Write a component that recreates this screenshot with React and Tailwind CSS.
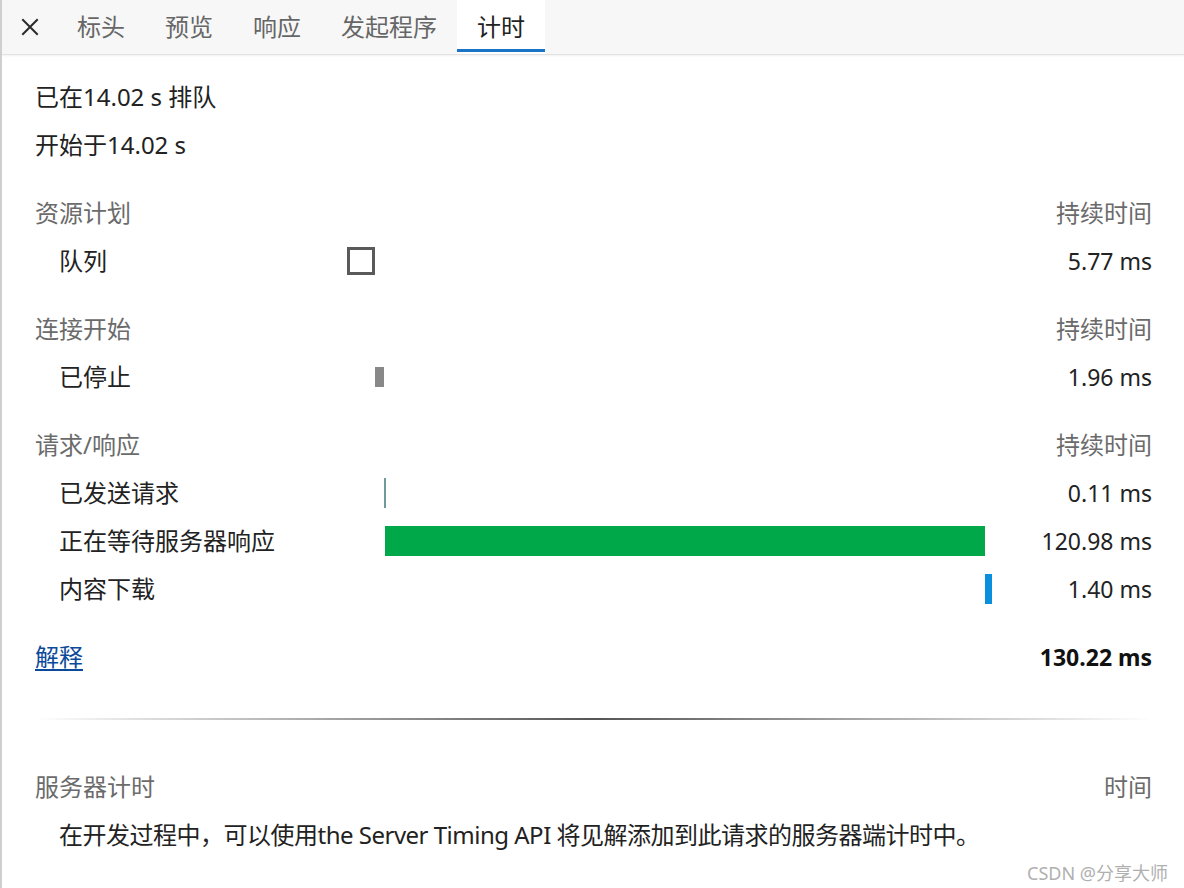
import React from "react";

const FONT = { fontFamily: '"Segoe UI", "Noto Sans", "Noto Sans CJK SC", sans-serif' };

function Tab({ label, active }) {
  return (
    <div
      className={
        "relative h-full flex items-center px-[20px] text-[24px] " +
        (active ? "bg-white text-[#222]" : "text-[#666]")
      }
    >
      <span className="leading-none">{label}</span>
      {active && <div className="absolute left-0 right-0 bottom-[2px] h-[3px] bg-[#1a73c4]" />}
    </div>
  );
}

function Header({ left, right }) {
  return (
    <div className="flex items-center justify-between h-[48px] text-[24px] text-[#6b6b6b]">
      <span>{left}</span>
      <span>{right}</span>
    </div>
  );
}

function Row({ label, value, children }) {
  return (
    <div className="flex items-center h-[48px] text-[24px] text-[#222]">
      <div className="w-[310px] pl-[24px] shrink-0">{label}</div>
      <div className="flex-1 flex items-center h-full">{children}</div>
      <div className="w-[158px] text-right shrink-0 text-[23px]">{value}</div>
    </div>
  );
}

export default function App() {
  return (
    <div className="relative w-[1184px] h-[888px] overflow-hidden bg-white border-l-[2px] border-[#cfcfcf]" style={FONT}>
      {/* Tab bar */}
      <div className="flex items-stretch h-[55px] bg-[#f7f7f7] border-b border-[#e2e2e2] shadow-[0_1px_2px_rgba(0,0,0,0.06)]">
        <div className="flex items-center pl-[18px] pr-[17px]">
          <svg width="20" height="20" viewBox="0 0 20 20" fill="none" stroke="#2b2b2b" strokeWidth="2" strokeLinecap="square">
            <path d="M3 3 L17 17 M17 3 L3 17" />
          </svg>
        </div>
        <Tab label="标头" />
        <Tab label="预览" />
        <Tab label="响应" />
        <Tab label="发起程序" />
        <Tab label="计时" active />
      </div>

      {/* Content */}
      <div className="pl-[33px] pr-[32px] pt-[18px]">
        <div className="flex items-center h-[48px] text-[24px] text-[#222]">已在14.02 s 排队</div>
        <div className="flex items-center h-[48px] text-[24px] text-[#222]">开始于14.02 s</div>

        <div className="mt-[20px]">
          <Header left="资源计划" right="持续时间" />
          <Row label="队列" value="5.77 ms">
            <div className="ml-[2px] w-[28px] h-[28px] border-[3px] border-[#5a5a5a]" />
          </Row>
        </div>

        <div className="mt-[20px]">
          <Header left="连接开始" right="持续时间" />
          <Row label="已停止" value="1.96 ms">
            <div className="ml-[30px] w-[9px] h-[20px] bg-[#888888]" />
          </Row>
        </div>

        <div className="mt-[20px]">
          <Header left="请求/响应" right="持续时间" />
          <Row label="已发送请求" value="0.11 ms">
            <div className="ml-[39px] w-[2px] h-[30px] bg-[#6f9a9a]" />
          </Row>
          <Row label="正在等待服务器响应" value="120.98 ms">
            <div className="ml-[40px] w-[600px] h-[30px] bg-[#00a84a]" />
          </Row>
          <Row label="内容下载" value="1.40 ms">
            <div className="ml-[640px] w-[7px] h-[30px] bg-[#0a8fdc]" />
          </Row>
        </div>

        <div className="mt-[20px] flex items-center justify-between h-[48px] text-[24px]">
          <a className="text-[#0b4a9a] underline underline-offset-[3px] cursor-pointer">解释</a>
          <span className="font-bold text-[#111] text-[23px]">130.22 ms</span>
        </div>

        <div className="mt-[37px] h-[2px] bg-linear-to-r from-transparent via-[#555555] to-transparent" />

        <div className="mt-[43px]">
          <Header left="服务器计时" right="时间" />
          <div className="flex items-center h-[48px] pl-[24px] text-[24px] text-[#222] tracking-[-0.5px]">
            在开发过程中，可以使用the Server Timing API 将见解添加到此请求的服务器端计时中。
          </div>
        </div>
      </div>

      {/* Watermark */}
      <div className="absolute right-[16px] bottom-[6px] text-[18px] text-[#b0b0b0] leading-none">
        CSDN @分享大师
      </div>
    </div>
  );
}
